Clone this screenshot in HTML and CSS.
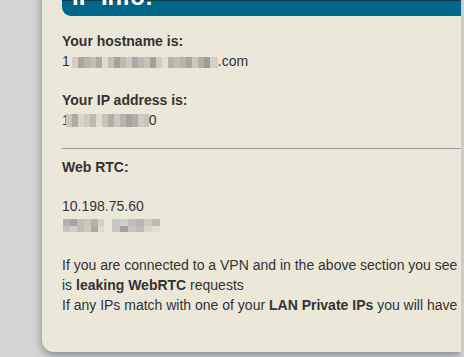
FILE: index.html
```html
<!DOCTYPE html>
<html lang="en">
<head>
<meta charset="utf-8">
<title>IP Info</title>
<link rel="stylesheet" href="styles.css">
</head>
<body>
<div class="viewport">
  <main class="page">
    <section class="card">
      <header class="banner"><h1 class="banner-title">IP Info:</h1></header>
      <div class="content">
        <div class="block">
          <div class="label">Your hostname is:</div>
          <div class="value">1<span class="mosaic mosaic-host"></span>.com</div>
        </div>
        <div class="block">
          <div class="label">Your IP address is:</div>
          <div class="value">1<span class="mosaic mosaic-ip"></span>0</div>
        </div>
        <hr class="divider">
        <div class="block">
          <div class="label">Web RTC:</div>
        </div>
        <div class="block">
          <div class="value">10.198.75.60</div>
          <div class="value"><span class="mosaic mosaic-a"></span><span class="mosaic mosaic-b"></span></div>
        </div>
        <p class="note">If you are connected to a VPN and in the above section you see<br>is <b>leaking WebRTC</b> requests<br>If any IPs match with one of your <b>LAN Private IPs</b> you will have</p>
      </div>
    </section>
  </main>
  <div class="scroll-edge"></div>
</div>
</body>
</html>
```

FILE: styles.css
```css
html, body {
  margin: 0;
  padding: 0;
}
body {
  width: 464px;
  height: 357px;
  overflow: hidden;
  background: #d5d5d5;
  font-family: "Liberation Sans", Arial, Helvetica, sans-serif;
  font-size: 14px;
  line-height: 20px;
  color: #333;
}
.viewport {
  display: flex;
  height: 357px;
}
.page {
  flex: 1;
  min-width: 0;
  padding-left: 42px;
}
.card {
  margin-top: -34px;
  background: #ebe7d9;
  border-radius: 0 0 0 12px;
  box-shadow: 0 3px 8px rgba(55, 65, 85, 0.55);
  padding: 0 0 37px 20px;
  overflow: hidden;
}
.banner {
  height: 50px;
  box-sizing: border-box;
  padding: 19px 0 0 10px;
  background: linear-gradient(to bottom, #00678a 0 34px, #0b3b4b 34px 35px, #00678a 35px);
  border-radius: 0 0 0 9px;
  overflow: hidden;
}
.banner-title {
  margin: 0;
  font-size: 24px;
  line-height: 24px;
  font-weight: bold;
  color: #fff;
}
.content {
  padding-top: 15px;
  white-space: nowrap;
}
.block {
  margin-bottom: 19px;
}
.label {
  font-weight: bold;
}
.divider {
  margin: -1px 0 8px;
  border: 0;
  border-top: 1px solid #9c9b98;
  height: 0;
}
.mosaic {
  display: inline-block;
  height: 13px;
  vertical-align: -2px;
}
.mosaic-host {
  width: 148px;
  background:
    linear-gradient(to right,
      #ebe7d9 0 2px, #d6cebb 2px 8px, #aaa69c 8px 14px, #b8b4a9 14px 20px, #c3beb2 20px 26px,
      #aeaba4 26px 32px, #e0dbcd 32px 38px, #c6c0ae 38px 44px, #a8a399 44px 50px, #bdbab3 50px 56px,
      #c9ccc6 56px 62px, #adaaa3 62px 68px, #bcb8af 68px 74px, #c8c3b8 74px 80px, #a4a09a 80px 86px,
      #cfcbbf 86px 92px, #e3dfd2 92px 98px, #b9b1a3 98px 104px, #c4bcb0 104px 110px, #bcb3a5 110px 116px,
      #aca79e 116px 122px, #cec8ba 122px 128px, #b4afa6 128px 134px, #9f9b95 134px 140px, #d4d0c5 140px 148px)
    0 2px / 100% 11px no-repeat;
}
.mosaic-ip {
  width: 83px;
  margin-left: -4px;
  background:
    linear-gradient(to right,
      #c3c6c2 0 6px, #aeaba3 6px 12px, #dcd6c8 12px 18px, #d0cbbd 18px 24px, #bfbbb1 24px 30px,
      #e2ddd0 30px 36px, #c9c4b6 36px 42px, #b5aea3 42px 48px, #cfc9bc 48px 54px, #b8b5ae 54px 60px,
      #a7a49e 60px 66px, #b2aea6 66px 72px, #d1ccc0 72px 78px, #c8c3b6 78px 83px)
    0 0 / 100% 13px no-repeat;
}
.mosaic-a {
  width: 41px;
  margin-left: 1px;
  vertical-align: -1px;
  background:
    linear-gradient(to right, #b2b3ac 0 7px, #a4a6a0 7px 14px, #c0beb5 14px 21px, #c9c6bc 21px 28px, #b6b3aa 28px 35px, #d5d1c5 35px 41px) 0 0 / 100% 7px no-repeat,
    linear-gradient(to right, #c4c4bc 0 7px, #d2cfc4 7px 14px, #bfbcb2 14px 21px, #cdcac0 21px 28px, #b6a898 28px 35px, #e2ddd0 35px 41px) 0 7px / 100% 6px no-repeat;
}
.mosaic-b {
  width: 48px;
  margin-left: 8px;
  vertical-align: -1px;
  background:
    linear-gradient(to right, #c6c7c0 0 8px, #d0cfc6 8px 16px, #c2c0b7 16px 24px, #b7b5ad 24px 32px, #cdcac0 32px 40px, #bcb9b1 40px 48px) 0 0 / 100% 7px no-repeat,
    linear-gradient(to right, #c7c7c0 0 8px, #9ea39e 8px 16px, #c9c6bd 16px 24px, #bdbbb3 24px 32px, #d8d5ca 32px 40px, #e0ddd2 40px 48px) 0 7px / 100% 6px no-repeat;
}
.note {
  margin: 18px 0 0;
}
.scroll-edge {
  flex: 0 0 3px;
  background: #cdcdcd;
  position: relative;
  z-index: 1;
}
```
